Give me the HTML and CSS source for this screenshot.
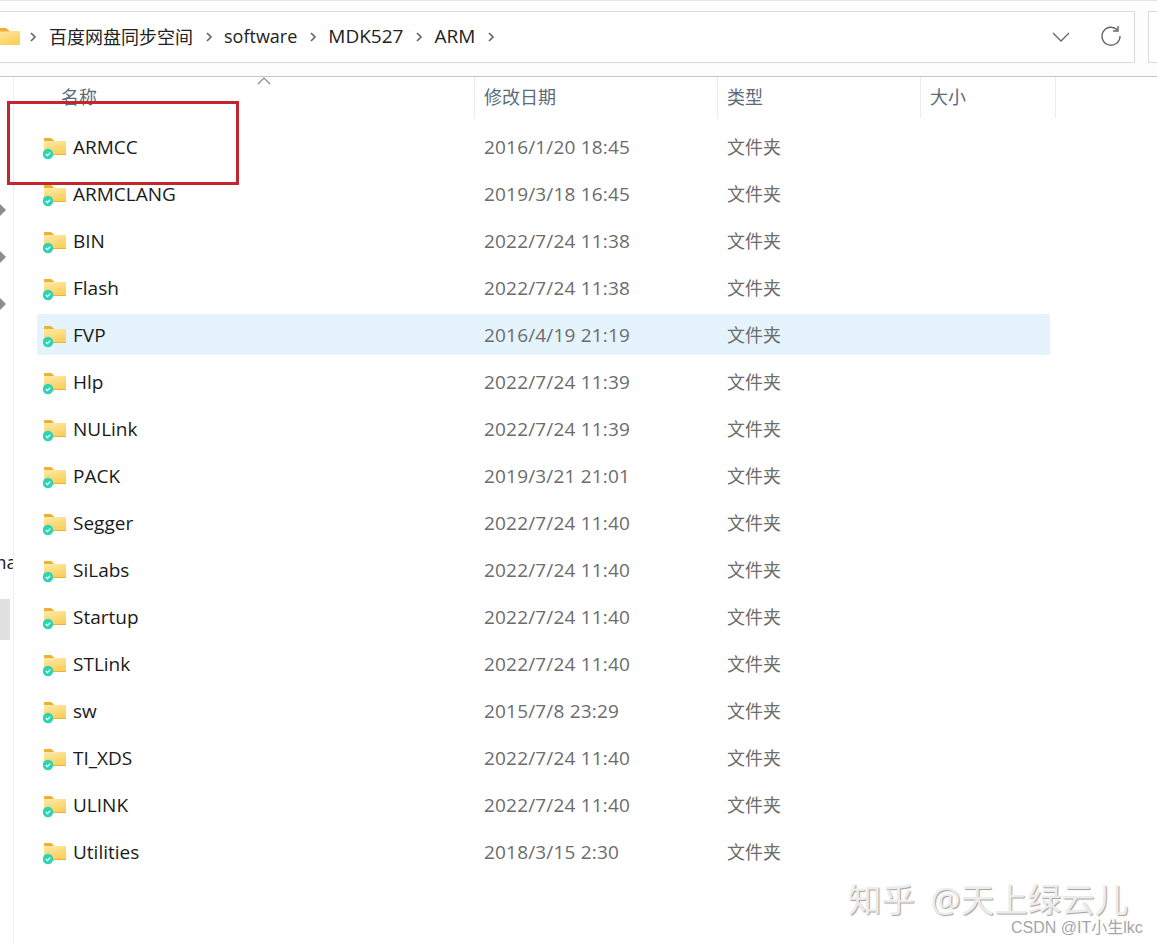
FILE: index.html
```html
<!DOCTYPE html>
<html lang="zh">
<head>
<meta charset="utf-8">
<title>ARM</title>
<link rel="stylesheet" href="styles.css">
</head>
<body>
<svg class="defs" width="0" height="0" aria-hidden="true">
  <defs>
    <linearGradient id="fg" x1="0" y1="0" x2="0.4" y2="1">
      <stop offset="0" stop-color="#fdeaaa"/>
      <stop offset="1" stop-color="#fbd05c"/>
    </linearGradient>
    <symbol id="folder" viewBox="0 0 24 23">
      <path d="M1 2.200C1 1.500 1.500 1 2.200 1H8l3 2.500v2H1z" fill="#f0b02f"/>
      <rect x="1" y="4" width="22" height="14" fill="url(#fg)"/>
      <rect x="1" y="17" width="22" height="1" fill="#e9b23e"/>
      <circle cx="5" cy="17" r="5.200" fill="#2dd4b4"/>
      <path d="M2.800 17l1.600 1.600 2.900-3" fill="none" stroke="#fff" stroke-width="1.300"/>
    </symbol>
  </defs>
</svg>
<div class="window">
  <header class="toolbar">
    <div class="address">
      <svg class="crumb-folder" width="20" height="17" viewBox="0 0 20 17"><path d="M0 1h7l3 2h10v14H0z" fill="url(#fg)"/><path d="M0 0h6l3 2.500v1H0z" fill="#f0b02f"/></svg>
      <svg class="chev" width="8" height="12" viewBox="0 0 8 12"><path d="M2 2l4 4-4 4" fill="none" stroke="#666" stroke-width="1.700"/></svg>
      <span class="crumb crumb-cjk">百度网盘同步空间</span>
      <svg class="chev" width="8" height="12" viewBox="0 0 8 12"><path d="M2 2l4 4-4 4" fill="none" stroke="#666" stroke-width="1.700"/></svg>
      <span class="crumb crumb-small">software</span>
      <svg class="chev" width="8" height="12" viewBox="0 0 8 12"><path d="M2 2l4 4-4 4" fill="none" stroke="#666" stroke-width="1.700"/></svg>
      <span class="crumb">MDK527</span>
      <svg class="chev" width="8" height="12" viewBox="0 0 8 12"><path d="M2 2l4 4-4 4" fill="none" stroke="#666" stroke-width="1.700"/></svg>
      <span class="crumb">ARM</span>
      <svg class="chev" width="8" height="12" viewBox="0 0 8 12"><path d="M2 2l4 4-4 4" fill="none" stroke="#666" stroke-width="1.700"/></svg>
      <svg class="drop" width="18" height="10" viewBox="0 0 18 10"><path d="M1 1l8 8 8-8" fill="none" stroke="#666" stroke-width="1.300"/></svg>
      <svg class="refresh" width="22" height="22" viewBox="0 0 22 22"><path d="M17.500 5A9 9 0 1 0 20 11" fill="none" stroke="#666" stroke-width="1.400"/><path d="M18 1v5h-5" fill="none" stroke="#666" stroke-width="1.400"/></svg>
    </div>
    <div class="search"></div>
  </header>
  <div class="body">
    <aside class="sidebar">
      <svg class="tri" width="7" height="14" viewBox="0 0 7 14"><path d="M0 1l6 6-6 6z" fill="#8d8d8d"/></svg>
      <svg class="tri" width="7" height="14" viewBox="0 0 7 14"><path d="M0 1l6 6-6 6z" fill="#8d8d8d"/></svg>
      <svg class="tri" width="7" height="14" viewBox="0 0 7 14"><path d="M0 1l6 6-6 6z" fill="#8d8d8d"/></svg>
      <span class="side-text">ma</span>
      <div class="side-selected"></div>
    </aside>
    <main class="list">
      <div class="head">
        <span class="hcell hname">名称</span>
        <span class="hcell">修改日期</span>
        <span class="hcell">类型</span>
        <span class="hcell hlast">大小</span>
      </div>
      <div class="rows">
        <div class="row"><svg class="ficon"><use href="#folder"/></svg><span class="name">ARMCC</span><span class="meta">2016/1/20 18:45</span><span class="meta">文件夹</span></div>
        <div class="row"><svg class="ficon"><use href="#folder"/></svg><span class="name">ARMCLANG</span><span class="meta">2019/3/18 16:45</span><span class="meta">文件夹</span></div>
        <div class="row"><svg class="ficon"><use href="#folder"/></svg><span class="name">BIN</span><span class="meta">2022/7/24 11:38</span><span class="meta">文件夹</span></div>
        <div class="row"><svg class="ficon"><use href="#folder"/></svg><span class="name">Flash</span><span class="meta">2022/7/24 11:38</span><span class="meta">文件夹</span></div>
        <div class="row selected"><svg class="ficon"><use href="#folder"/></svg><span class="name">FVP</span><span class="meta">2016/4/19 21:19</span><span class="meta">文件夹</span></div>
        <div class="row"><svg class="ficon"><use href="#folder"/></svg><span class="name">Hlp</span><span class="meta">2022/7/24 11:39</span><span class="meta">文件夹</span></div>
        <div class="row"><svg class="ficon"><use href="#folder"/></svg><span class="name">NULink</span><span class="meta">2022/7/24 11:39</span><span class="meta">文件夹</span></div>
        <div class="row"><svg class="ficon"><use href="#folder"/></svg><span class="name">PACK</span><span class="meta">2019/3/21 21:01</span><span class="meta">文件夹</span></div>
        <div class="row"><svg class="ficon"><use href="#folder"/></svg><span class="name">Segger</span><span class="meta">2022/7/24 11:40</span><span class="meta">文件夹</span></div>
        <div class="row"><svg class="ficon"><use href="#folder"/></svg><span class="name">SiLabs</span><span class="meta">2022/7/24 11:40</span><span class="meta">文件夹</span></div>
        <div class="row"><svg class="ficon"><use href="#folder"/></svg><span class="name">Startup</span><span class="meta">2022/7/24 11:40</span><span class="meta">文件夹</span></div>
        <div class="row"><svg class="ficon"><use href="#folder"/></svg><span class="name">STLink</span><span class="meta">2022/7/24 11:40</span><span class="meta">文件夹</span></div>
        <div class="row"><svg class="ficon"><use href="#folder"/></svg><span class="name">sw</span><span class="meta">2015/7/8 23:29</span><span class="meta">文件夹</span></div>
        <div class="row"><svg class="ficon"><use href="#folder"/></svg><span class="name">TI_XDS</span><span class="meta">2022/7/24 11:40</span><span class="meta">文件夹</span></div>
        <div class="row"><svg class="ficon"><use href="#folder"/></svg><span class="name">ULINK</span><span class="meta">2022/7/24 11:40</span><span class="meta">文件夹</span></div>
        <div class="row"><svg class="ficon"><use href="#folder"/></svg><span class="name">Utilities</span><span class="meta">2018/3/15 2:30</span><span class="meta">文件夹</span></div>
      </div>
    </main>
  </div>
  <svg class="caret" width="14" height="8" viewBox="0 0 14 8"><path d="M1 7l6-6 6 6" fill="none" stroke="#8a8a8a" stroke-width="1.200"/></svg>
  <div class="redbox"></div>
  <div class="mark-zhihu">知乎 @天上绿云儿</div>
  <div class="mark-csdn">CSDN @IT小生lkc</div>
</div>
</body>
</html>
```
FILE: styles.css
```css
* { box-sizing: border-box; }
html, body { margin: 0; padding: 0; background: #fff; }
body {
  width: 1157px;
  height: 945px;
  overflow: hidden;
  font-family: "Open Sans", "Noto Sans CJK SC", sans-serif;
}
.defs { position: absolute; }
.window { position: relative; width: 1157px; height: 945px; overflow: hidden; }

.toolbar {
  height: 77px;
  padding-top: 11px;
  border-top: 1px solid #e4e4e4;
  border-bottom: 1px solid #c4c4c4;
  display: flex;
  gap: 13px;
  background: #fdfdfd;
}
.address {
  flex: 0 0 1135px;
  height: 52px;
  margin-top: -1px;
  border: 1px solid #dadada;
  border-left: 0;
  background: #fff;
  display: flex;
  align-items: center;
  color: #1a1a1a;
  font-size: 19px;
}
.search {
  flex: 1;
  height: 52px;
  margin-top: -1px;
  border: 1px solid #dadada;
  border-right: 0;
  background: #fff;
}
.crumb-folder { margin-right: 9px; margin-top: -1px; flex: none; }
.chev { flex: none; }
.crumb { margin: -2px 12px 0 11px; white-space: nowrap; color: #222; }
.crumb-cjk { font-size: 18px; margin-left: 12px; }
.crumb-small { font-size: 18px; }
.drop { margin-left: auto; margin-top: -1px; }
.refresh { margin: -3px 12px 0 30px; }

.body { display: flex; height: 868px; }
.sidebar {
  flex: 0 0 14px;
  border-right: 1px solid #eeeeee;
  overflow: hidden;
  display: flex;
  flex-direction: column;
  padding-top: 126px;
}
.tri { display: block; margin-bottom: 33px; flex: none; }
.side-text {
  margin: 206px 0 0 -11px;
  font-size: 19px;
  line-height: 24px;
  color: #222;
  white-space: nowrap;
}
.side-selected {
  width: 10px;
  height: 41px;
  margin-top: 25px;
  background: #e1e1e1;
}

.list { flex: 1; min-width: 0; }
.head {
  display: grid;
  grid-template-columns: 461px 243px 203px 135px;
  height: 41px;
  margin-bottom: 8px;
}
.hcell {
  padding: 8px 0 0 9px;
  border-right: 1px solid #ececec;
  font-size: 18px;
  line-height: 24px;
  color: #5b6b79;
}
.hname { padding-left: 47px; }

.rows {
  display: flex;
  flex-direction: column;
  gap: 6px;
  margin-left: 23px;
  width: 1013px;
}
.row {
  display: grid;
  grid-template-columns: 22px 418px 243px 1fr;
  height: 41px;
  align-items: center;
  padding-left: 7px;
  font-size: 19px;
}
.selected { background: #e5f3fc; }
.ficon { width: 24px; height: 23px; margin: 3px 0 0 -1px; overflow: visible; }
.name { padding-left: 7px; color: #1a1a1a; white-space: nowrap; }
.meta { color: #6c6c6c; white-space: nowrap; letter-spacing: 0.18px; }
.meta:last-child { font-size: 18px; letter-spacing: 0; margin-top: -2px; }

.caret { position: absolute; left: 257px; top: 77px; }
.redbox {
  position: absolute;
  left: 7px;
  top: 101px;
  width: 232px;
  height: 84px;
  border: 3px solid #c4262e;
}
.mark-zhihu {
  position: absolute;
  left: 848px;
  top: 881px;
  font-size: 33.500px;
  line-height: 36px;
  word-spacing: 7px;
  white-space: nowrap;
  color: #ececec;
  text-shadow: 1px 1px 1px #a0a0a0;
}
.mark-csdn {
  position: absolute;
  left: 1011px;
  top: 918px;
  font-family: "Liberation Sans", "Noto Sans CJK SC", sans-serif;
  font-size: 16px;
  line-height: 20px;
  white-space: nowrap;
  color: #a6a6a6;
}
```
